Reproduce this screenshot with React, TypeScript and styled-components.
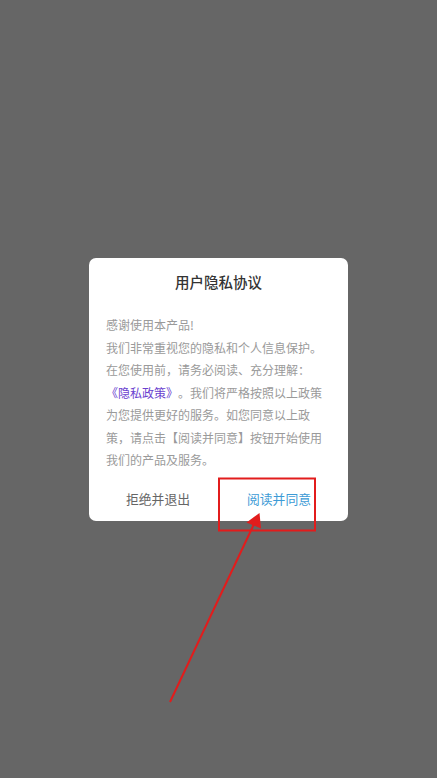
import React from 'react'
import styled, { createGlobalStyle } from 'styled-components'

const GlobalStyle = createGlobalStyle`
    html, body {
        margin: 0;
        padding: 0;
        height: 100%;
    }
    body {
        font-family: "Noto Sans CJK SC", "Noto Sans", sans-serif;
    }
    #root {
        height: 100%;
    }
`

export default function App() {
    return (
        <>
            <GlobalStyle />
            <Page>
                <Dialog>
                    <Title>用户隐私协议</Title>
                    <Body>
                        <Line>感谢使用本产品!</Line>
                        <Line>我们非常重视您的隐私和个人信息保护。</Line>
                        <Line>在您使用前，请务必阅读、充分理解：</Line>
                        <Line>
                            <Link>《隐私政策》</Link>。我们将严格按照以上政策
                        </Line>
                        <Line>为您提供更好的服务。如您同意以上政</Line>
                        <Line>策，请点击【阅读并同意】按钮开始使用</Line>
                        <Line>我们的产品及服务。</Line>
                    </Body>
                    <Actions>
                        <ActionButton>拒绝并退出</ActionButton>
                        <ActionButton primary>阅读并同意</ActionButton>
                    </Actions>
                </Dialog>
                <Annotation width="437" height="778" viewBox="0 0 437 778">
                    <rect x="219" y="478.5" width="96" height="52" fill="none" stroke="#e21c1c" strokeWidth="2" />
                    <line x1="170" y1="702" x2="254" y2="524" stroke="#e21c1c" strokeWidth="2" />
                    <polygon points="259.5,513 261,528.5 246.5,522.5" fill="#e21c1c" />
                </Annotation>
            </Page>
        </>
    )
}

const Page = styled.div`
    position: relative;
    width: 100%;
    height: 100%;
    min-height: 778px;
    background-color: #666666;
    display: flex;
    align-items: center;
    justify-content: center;
    overflow: hidden;
`
const Dialog = styled.div`
    width: 259px;
    height: 263px;
    box-sizing: border-box;
    background: #fff;
    border-radius: 7px;
    padding-top: 14px;
    display: flex;
    flex-direction: column;
`
const Title = styled.div`
    text-align: center;
    font-size: 14.5px;
    line-height: 20px;
    font-weight: 500;
    color: #333;
`
const Body = styled.div`
    margin-top: 22.75px;
    padding: 0 17px;
    font-size: 12px;
    line-height: 22.5px;
    color: #9a9a9a;
    text-spacing-trim: space-all;
    font-feature-settings: "halt" 0, "chws" 0;
`
const Line = styled.div`
    white-space: nowrap;
`
const Link = styled.span`
    color: #6b3fcf;
`
const Actions = styled.div`
    margin-top: auto;
    height: 44px;
    padding: 0 37px 0 37px;
    display: flex;
    align-items: center;
    justify-content: space-between;
`
const ActionButton = styled.div<{ primary?: boolean }>`
    font-size: 12.8px;
    line-height: 20px;
    color: ${(props) => (props.primary ? '#3d9bd6' : '#666')};
    cursor: pointer;
`
const Annotation = styled.svg`
    position: absolute;
    left: 0;
    top: 0;
    pointer-events: none;
`
